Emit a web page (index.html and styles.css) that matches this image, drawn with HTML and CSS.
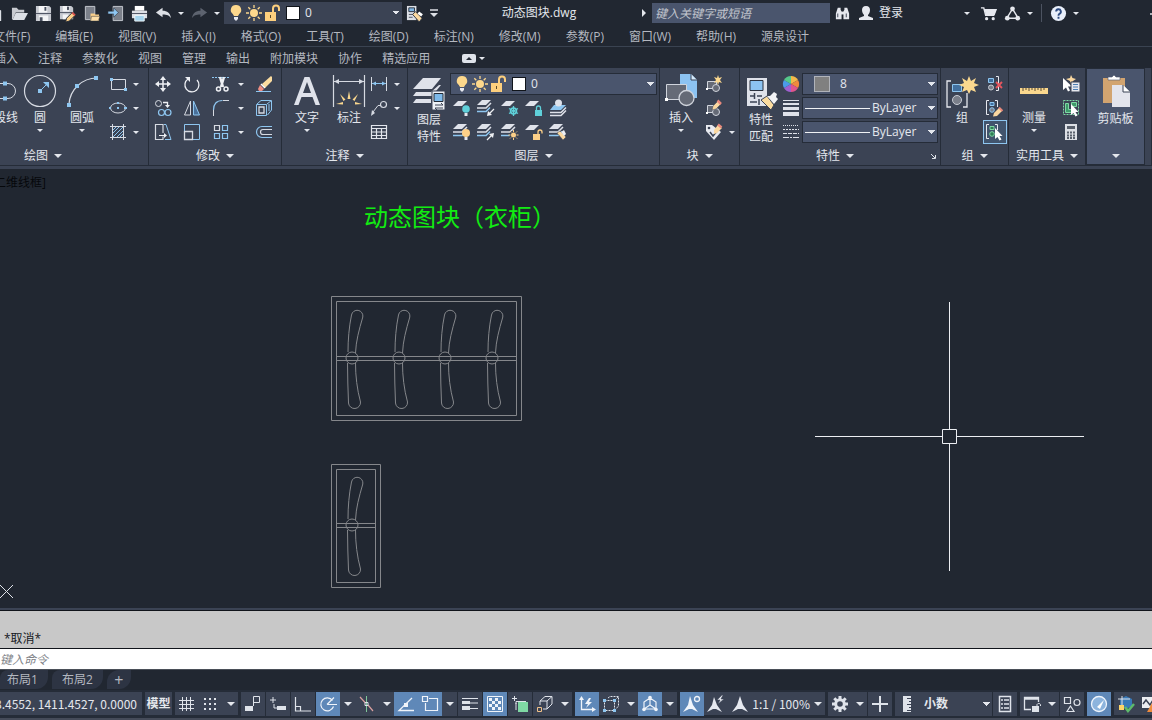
FILE: index.html
```html
<!DOCTYPE html>
<html lang="zh-CN">
<head>
  <meta charset="UTF-8">
  <meta name="viewport" content="width=device-width, initial-scale=1.0">
  <title>动态图块.dwg</title>
  <link rel="stylesheet" href="styles.css">
</head>
<body>
  <!-- icon sprite -->
  <svg class="sprite" aria-hidden="true">
    <symbol id="new" viewBox="0 0 18 18"><path d="M4 2h7l4 4v11H4z" fill="#dcdfe5"/></symbol>
    <symbol id="open" viewBox="0 0 18 18"><path d="M1 15V3h5l2 2h6v3H5L2 15z" fill="#c8cad0"/><path d="M5 8.500h13L14 16H1.500z" fill="#dcdfe5"/></symbol>
    <symbol id="save" viewBox="0 0 18 18"><path d="M1 1h14l2 2v14H1z" fill="#c6c9d0"/><path d="M4 1h9v7H4zM4 11h10v6H4z" fill="#f4f5f7"/><path d="M10 2h2v4h-2zM5 13h3v4H5z" fill="#4a5160"/><path d="M1 9h16" stroke="#4a5160"/></symbol>
    <symbol id="saveas" viewBox="0 0 18 18"><path d="M1 1h12l2 2v12H1z" fill="#c6c9d0"/><path d="M4 1h7v6H4zM4 10h6v5H4z" fill="#f4f5f7"/><path d="M9 2h1v3H9zM1 8h14" stroke="#4a5160"/><path d="M8 14l6-6 3 3-6 6-4 1z" fill="#fbd08a" stroke="#252b36"/><path d="M14 8l3 3" stroke="#d9534f" stroke-width="2"/></symbol>
    <symbol id="webopen" viewBox="0 0 18 18"><path d="M2.500 1.500h10v14h-10z" fill="#7b808a" stroke="#c6c9d0"/><path d="M8 9h4l1 1h4v7H8z" fill="#fbd08a"/><path d="M9 12h9l-2 5H8z" fill="#ffe0a8" stroke="#252b36" stroke-width=".5"/></symbol>
    <symbol id="websave" viewBox="0 0 18 18"><path d="M6.500 1.500h10v15h-10z" fill="#7b808a" stroke="#c6c9d0"/><path d="M1 6.500h6V3l5 5-5 5V9.500H1z" fill="#8fc7f2" stroke="#252b36" stroke-width=".6"/></symbol>
    <symbol id="print" viewBox="0 0 18 18"><path d="M4 1h10v5H4z" fill="#fff"/><path d="M1 6h16v8H1z" fill="#dcdfe5"/><path d="M1 9h16" stroke="#4a5160"/><path d="M4 11h10v6H4z" fill="#a5d4ee" stroke="#eef4f8"/></symbol>
    <symbol id="undo" viewBox="0 0 18 18"><path d="M1 8l7-5v3c5 0 8 2 9 8-2-3-4-4-9-4v3z" fill="#dcdfe5"/></symbol>
    <symbol id="redo" viewBox="0 0 18 18"><path d="M17 8l-7-5v3c-5 0-8 2-9 8 2-3 4-4 9-4v3z" fill="#5d636f"/></symbol>
    <symbol id="bulb" viewBox="0 0 18 18"><path d="M9 1a5 5 0 0 1 3.200 9L11 12H7l-1.200-2A5 5 0 0 1 9 1z" fill="#fdd88c"/><path d="M7 13h4v2l-2 2-2-2z" fill="#e8eaf0"/></symbol>
    <symbol id="sun" viewBox="0 0 18 18"><circle cx="9" cy="9" r="4" fill="#fdd88c"/><path d="M9 1v3M9 14v3M1 9h3M14 9h3M3.300 3.300l2 2M12.700 12.700l2 2M14.700 3.300l-2 2M5.300 12.700l-2 2" stroke="#fdd88c" stroke-width="1.300"/></symbol>
    <symbol id="unlock" viewBox="0 0 18 18"><path d="M2 8h11v9H2z" fill="#fdcf7d"/><path d="M10 8V4.500a3 3 0 0 1 6 0V7" fill="none" stroke="#fdcf7d" stroke-width="2"/><path d="M7 11h1v3H7z" fill="#5a4a2a"/></symbol>
    <symbol id="wsmatch" viewBox="0 0 18 18"><path d="M1 1h10v15H1z" fill="#dcdfe5"/><path d="M3 3h6v4H3z" fill="#7fb6e4" stroke="#2c3340"/><path d="M3 10h5M3 13h4" stroke="#4a5160"/><path d="M7 10l3-3 7 7-3 4z" fill="#fbd9a0" stroke="#2c3340"/><path d="M13 8l4 3" stroke="#fff" stroke-width="3"/></symbol>
    <symbol id="qmenu" viewBox="0 0 12 12"><path d="M2 3h8" stroke="#dcdfe5" stroke-width="1.500"/><path d="M2 6h8l-4 4z" fill="#dcdfe5"/></symbol>
    <symbol id="find" viewBox="0 0 18 18"><path d="M4 3h3v2l1 2v8H2V9zM14 3h-3v2l-1 2v8h6V9z" fill="#e6e8ee"/><path d="M7 7h4v3H7z" fill="#e6e8ee"/><path d="M4 9v4M13 9v4" stroke="#3a4150"/></symbol>
    <symbol id="user" viewBox="0 0 18 18"><path d="M9 2c3 0 4 2 4 4s-1 4-2 5v1l5 2v2H2v-2l5-2v-1C6 10 5 8 5 6s1-4 4-4z" fill="#e6e8ee"/></symbol>
    <symbol id="cart" viewBox="0 0 18 18"><path d="M1 3h3l2 8h9M5 5h12l-2 5H6" fill="none" stroke="#e6e8ee" stroke-width="1.500"/><path d="M5 5h12l-2 6H6z" fill="#e6e8ee"/><circle cx="7" cy="14.500" r="1.700" fill="#e6e8ee"/><circle cx="14" cy="14.500" r="1.700" fill="#e6e8ee"/></symbol>
    <symbol id="a360" viewBox="0 0 18 18"><path d="M9 4L3 14h12z" fill="none" stroke="#e6e8ee" stroke-width="1.500"/><circle cx="9" cy="4" r="2.500" fill="#e6e8ee"/><circle cx="3.500" cy="14" r="2.500" fill="#e6e8ee"/><circle cx="14.500" cy="14" r="2.500" fill="#e6e8ee"/></symbol>
    <symbol id="help" viewBox="0 0 18 18"><circle cx="9" cy="9" r="8" fill="#e9effa"/><path d="M6.500 7a2.500 2.500 0 1 1 3.500 2.300c-1 .5-1 1-1 2M9 12.500v2" fill="none" stroke="#2d4a80" stroke-width="2"/></symbol>
    <symbol id="min" viewBox="0 0 12 12"><path d="M2 9h8" stroke="#dcdfe5" stroke-width="1.500"/></symbol>

    <symbol id="pline" viewBox="0 0 36 36"><path d="M5 10.500h21a7.500 7.500 0 0 1 0 15H8" fill="none" stroke="#d6dae2"/><path d="M21 8.500h4v4h-4zM21 23.500h4v4h-4z" fill="#8ec6f0"/></symbol>
    <symbol id="circle" viewBox="0 0 36 36"><circle cx="18" cy="18" r="15.500" fill="none" stroke="#d6dae2" stroke-width="1.200"/><path d="M18 18l6-6" stroke="#8ec6f0"/><path d="M16 16h4v4h-4zM21 9h6v6z" fill="#8ec6f0"/></symbol>
    <symbol id="arc" viewBox="0 0 36 36"><path d="M5 31A28 28 0 0 1 33 5" fill="none" stroke="#d6dae2" stroke-width="1.200"/><path d="M3 30h4v4H3zM11 11h4v4h-4zM30 3h4v4h-4z" fill="#8ec6f0"/></symbol>
    <symbol id="rect" viewBox="0 0 18 18"><path d="M2.500 4.500h14v10h-14z" fill="none" stroke="#d6dae2"/><path d="M1 3h3v3H1zM15 13h3v3h-3z" fill="#8ec6f0"/></symbol>
    <symbol id="ellipse" viewBox="0 0 18 18"><ellipse cx="9" cy="9" rx="7.500" ry="5" fill="none" stroke="#d6dae2"/><path d="M8 8h2v2H8zM8 3h2v2H8zM15 8h3v2h-3zM0 8h2v2H0z" fill="#8ec6f0"/></symbol>
    <symbol id="hatch" viewBox="0 0 18 18"><path d="M4 14L14 4M4 10l6-6M8 14l6-6M4 7l3-3M11 14l3-3" stroke="#8ec6f0"/><path d="M3.500 1v16M14.500 1v16M1 3.500h16M1 14.500h16" stroke="#d6dae2"/></symbol>
    <symbol id="move" viewBox="0 0 18 18"><path d="M9 3v12M3 9h12" stroke="#eef0f4" stroke-width="1.500"/><path d="M9 1l3 4H6zM9 17l3-4H6zM1 9l4-3v6zM17 9l-4-3v6z" fill="#eef0f4"/></symbol>
    <symbol id="rotate" viewBox="0 0 18 18"><path d="M5 4a7 7 0 1 0 9 1" fill="none" stroke="#eef0f4" stroke-width="1.300"/><path d="M2 2h5v5z" fill="#eef0f4"/></symbol>
    <symbol id="trim" viewBox="0 0 18 18"><path d="M0 2.500h17" stroke="#8ec6f0" stroke-dasharray="2 1"/><path d="M8 2l3 10M12 2L9 12" stroke="#eef0f4" stroke-width="2.500"/><circle cx="6.500" cy="14" r="2" fill="none" stroke="#eef0f4" stroke-width="1.500"/><circle cx="14" cy="14" r="2" fill="none" stroke="#eef0f4" stroke-width="1.500"/></symbol>
    <symbol id="erase" viewBox="0 0 18 18"><path d="M1 16.500h15" stroke="#8ec6f0"/><path d="M7 9L16 1l1 1v4l-7 7z" fill="#fbdca0"/><path d="M5 10l4 4-2 2H4l-1-2z" fill="#ef8e83"/><path d="M6 9l4 4" stroke="#fff" stroke-width="1.500"/></symbol>
    <symbol id="copy" viewBox="0 0 18 18"><circle cx="4.500" cy="4.500" r="3" fill="none" stroke="#d6dae2"/><path d="M9 3.500h4.500V7" fill="none" stroke="#eef0f4" stroke-width="1.300"/><path d="M11 6h5l-2.500 3z" fill="#eef0f4"/><circle cx="7.500" cy="13.500" r="3" fill="none" stroke="#8ec6f0" stroke-width="1.200"/><circle cx="14" cy="13.500" r="3" fill="none" stroke="#8ec6f0" stroke-width="1.200"/></symbol>
    <symbol id="mirror" viewBox="0 0 18 18"><path d="M7.500 2v14h-6z" fill="none" stroke="#d6dae2"/><path d="M10.500 2v14h6z" fill="#49709a" stroke="#8ec6f0"/></symbol>
    <symbol id="fillet" viewBox="0 0 18 18"><path d="M1.500 11c0-6 3-9.500 9-9.500" fill="none" stroke="#8ec6f0" stroke-width="1.200"/><path d="M1.500 11v6M11 1.500h6" stroke="#d6dae2"/></symbol>
    <symbol id="explode" viewBox="0 0 18 18"><path d="M1.500 5.500h10v11h-10z" fill="none" stroke="#8ec6f0"/><path d="M4 8h5v6H4z" fill="none" stroke="#d6dae2" stroke-width="1.300"/><path d="M2 5l4-3.500h10.500M16.500 2v9l-4 5M12 5l4.500-3.500M14 5v7" fill="none" stroke="#8ec6f0"/></symbol>
    <symbol id="stretch" viewBox="0 0 18 18"><path d="M9 13.500v3H1.500v-15H9V10" fill="none" stroke="#d6dae2" stroke-width="1.200"/><path d="M10 1.500h2l5 15h-6" fill="none" stroke="#8ec6f0"/><path d="M5 12.500h7" stroke="#eef0f4"/><path d="M10 10l3 2.500-3 2.500z" fill="#eef0f4"/></symbol>
    <symbol id="scale" viewBox="0 0 18 18"><path d="M1.500 8V1.500h15v15H10" fill="none" stroke="#8ec6f0"/><path d="M1.500 8.500h8v8h-8z" fill="none" stroke="#d6dae2" stroke-width="1.300"/></symbol>
    <symbol id="array" viewBox="0 0 18 18"><path d="M2.500 2.500h5v5h-5z" fill="none" stroke="#d6dae2" stroke-width="1.200"/><path d="M10.500 2.500h5v5h-5zM2.500 10.500h5v5h-5zM10.500 10.500h5v5h-5z" fill="none" stroke="#8ec6f0" stroke-width="1.200"/></symbol>
    <symbol id="offset" viewBox="0 0 18 18"><path d="M17 3.500H7a5.500 5.500 0 0 0 0 11h10" fill="none" stroke="#8ec6f0" stroke-width="1.200"/><path d="M17 6.500H8a2.500 2.500 0 0 0 0 5h9" fill="none" stroke="#d6dae2" stroke-width="1.200"/></symbol>

    <symbol id="mtext" viewBox="0 0 36 36"><path fill-rule="evenodd" d="M5 32L15.500 4h5L31 32h-4.500l-3-8h-11l-3 8zM14 20h8L18 9z" fill="#dfe2ea"/></symbol>
    <symbol id="dim" viewBox="0 0 36 36"><path d="M2.500 2v32M33.500 2v32M3 8.500h30" stroke="#d6dae2" stroke-width="1.200"/><path d="M3 8.500l5-2.500v5zM33 8.500l-5-2.500v5z" fill="#d6dae2"/><g fill="#fbd88e"><path d="M18 18l1.500 8h-3zM9 21l5.500 5.500-2 1.500zM27 21l-5.500 5.500 2 1.500zM5 31l7-2v2.500zM31 31l-7-2v2.500z"/></g></symbol>
    <symbol id="lineardim" viewBox="0 0 18 18"><path d="M1.500 2v14M16.500 2v14" stroke="#d6dae2"/><path d="M2 8.500h14" stroke="#8ec6f0"/><path d="M2 8.500l4-2v4zM16 8.500l-4-2v4z" fill="#8ec6f0"/></symbol>
    <symbol id="leader" viewBox="0 0 18 18"><circle cx="13.500" cy="5.500" r="3" fill="none" stroke="#d6dae2" stroke-width="1.200"/><path d="M10.500 6.500H8L3 13" fill="none" stroke="#d6dae2"/><path d="M1 17l1-6 3 3z" fill="#d6dae2"/></symbol>
    <symbol id="table" viewBox="0 0 18 18"><path d="M1.500 2.500h15v13h-15zM1.500 5.500h15M1.500 9h15M1.500 12.500h15M6.500 5v11M11.500 5v11" fill="none" stroke="#e2e5ec" stroke-width="1.200"/></symbol>
    <symbol id="layers" viewBox="0 0 36 36"><path d="M12 3h18l-9 11H2z" fill="#dfe2ea"/><path d="M5 17l-3 4h19l9-11h-2l-8 7zM5 24l-3 4h18v-4z" fill="#dfe2ea"/><path d="M21 16h13v19H21z" fill="#eef1f6" stroke="#3b4354"/><path d="M23 18.500h9v8h-9z" fill="#7db9ea" stroke="#222a36"/><path d="M24 30h8l-2-2M32 33h-8l2 2" fill="none" stroke="#3b4354"/></symbol>
    <symbol id="ly" viewBox="0 0 18 18"><path d="M5 2h9l-5 5H0z" fill="#dfe2ea"/></symbol>
    <symbol id="ly3" viewBox="0 0 18 18"><path d="M5 1h9L9 6H0z" fill="#dfe2ea"/><path d="M0 9h9l5-5" fill="none" stroke="#dfe2ea" stroke-width="1.500"/><path d="M0 12.500h9l4-4" fill="none" stroke="#8ec6f0" stroke-width="1.500"/></symbol>
    <symbol id="lyoff" viewBox="0 0 18 18"><use href="#ly"/><circle cx="13" cy="10" r="3.800" fill="#5fd0da"/><path d="M11.500 14h3v3h-3z" fill="#e6e8ee"/></symbol>
    <symbol id="lyiso" viewBox="0 0 18 18"><use href="#ly3"/><path d="M17 10l-5 5" stroke="#eef0f4" stroke-width="1.300"/><path d="M10 17l1-5 4 4z" fill="#eef0f4"/></symbol>
    <symbol id="lyfrz" viewBox="0 0 18 18"><use href="#ly"/><circle cx="12.500" cy="12" r="3" fill="#3b4354" stroke="#5fd0da" stroke-width="1.500"/><path d="M12.500 7v10M8 9.500l9 5M17 9.500l-9 5" stroke="#5fd0da" stroke-width="1.300"/></symbol>
    <symbol id="lylock" viewBox="0 0 18 18"><use href="#ly"/><path d="M10 11h7v6h-7z" fill="#5fd0da"/><path d="M11.500 11V9a2 2 0 0 1 4 0v2" fill="none" stroke="#5fd0da" stroke-width="1.300"/></symbol>
    <symbol id="lycur" viewBox="0 0 18 18"><path d="M5 6h12l-5 5H1z" fill="#8ec6f0"/><path d="M1 13.500h11l5-5M1 16.500h11l5-5" fill="none" stroke="#dfe2ea" stroke-width="1.500"/><circle cx="9.500" cy="4" r="3.500" fill="#dfe2ea"/></symbol>
    <symbol id="lyon" viewBox="0 0 18 18"><use href="#ly3"/><circle cx="13" cy="10" r="4" fill="#fdd088"/><path d="M11.500 14h3v3h-3z" fill="#e6e8ee"/></symbol>
    <symbol id="lyun" viewBox="0 0 18 18"><use href="#ly3"/><path d="M10 17l5-5" stroke="#eef0f4" stroke-width="1.300"/><path d="M17 10l-1 5-4-4z" fill="#eef0f4"/></symbol>
    <symbol id="lythaw" viewBox="0 0 18 18"><use href="#ly3"/><circle cx="12.500" cy="12" r="4" fill="#3b4354"/><circle cx="12.500" cy="12" r="2.500" fill="#fdd088"/><path d="M12.500 7v2M12.500 15v2M7.500 12h2M15.500 12h2M9 8.500l1 1M15 14.500l1 1M16 8.500l-1 1M10 14.500l-1 1" stroke="#fdd088"/></symbol>
    <symbol id="lyulk" viewBox="0 0 18 18"><use href="#ly"/><path d="M8 11h7v6H8z" fill="#fdd088"/><path d="M13 11V9a2 2 0 0 1 4 0v1.500" fill="none" stroke="#fdd088" stroke-width="1.300"/></symbol>
    <symbol id="lymatch" viewBox="0 0 18 18"><use href="#ly3"/><path d="M8 10l3-2 6 6-3 3z" fill="#fbd9a0" stroke="#3b4354" stroke-width=".5"/><path d="M12 9l3-2 2 4-2 2z" fill="#eef0f4"/></symbol>
    <symbol id="insert" viewBox="0 0 36 36"><path d="M17 1h11l6 6v18H17z" fill="#8cc3f2"/><path d="M28 1v6h6" fill="#d6ebfc" stroke="#3b4354"/><path d="M3.500 11.500h20v15h-20z" fill="#656a76" stroke="#d0d4dc"/><circle cx="23.500" cy="25" r="7.500" fill="#656a76" stroke="#d0d4dc" stroke-width="1.300"/><path d="M2 25h3v3H2z" fill="#fff"/></symbol>
    <symbol id="blk" viewBox="0 0 18 18"><path d="M2.500 6.500h9v7h-9z" fill="#656a76" stroke="#d0d4dc"/><circle cx="11" cy="13" r="3.500" fill="#656a76" stroke="#d0d4dc"/><path d="M1 13h2v2H1z" fill="#fff"/></symbol>
    <symbol id="blknew" viewBox="0 0 18 18"><use href="#blk"/><path d="M13 0l1 3 3-1-2 3 2 3-3-1-1 3-1-3-3 1 2-3-2-3 3 1z" fill="#fbd88e"/></symbol>
    <symbol id="blkedit" viewBox="0 0 18 18"><use href="#blk"/><path d="M8 7l5-5 3 3-5 5-4 1z" fill="#fbd8a0" stroke="#3b4354" stroke-width=".5"/><path d="M12.500 1.500l3.500 3.500" stroke="#e8897c" stroke-width="2.500"/></symbol>
    <symbol id="attr" viewBox="0 0 18 18"><path d="M1 2h6l9 7-7 8-8-9z" fill="#e8eaf0"/><circle cx="4" cy="5" r="1.300" fill="#3b4354"/><path d="M5 9l3 4 5-6" fill="none" stroke="#3b4354" stroke-width="1.500"/><path d="M9 7l4-5 4 3-5 5-3 1z" fill="#fbd8a0"/><path d="M13 1.500l3.500 3" stroke="#e8897c" stroke-width="2.500"/></symbol>
    <symbol id="match" viewBox="0 0 36 36"><path d="M4 3h20v28H4z" fill="#dfe2ea"/><path d="M7 5.500h13v10H7z" fill="#8cc3f2" stroke="#2a313e"/><path d="M7 21h4M14 21h5M7 27h7M11.500 18v6M16 24v6" stroke="#3b4354" stroke-width="1.500"/><path d="M18 25l6-4 7 9-3 5z" fill="#fbdca0" stroke="#3b4354"/><path d="M24 21l3 0 4-4 3 2-1 3 2 2-4 5z" fill="#f2f3f6"/></symbol>
    <symbol id="wheel" viewBox="0 0 18 18"><path d="M9 9V1a8 8 0 0 1 7 4z" fill="#f2b94a"/><path d="M9 9l7-4a8 8 0 0 1 0 8z" fill="#f08a3c"/><path d="M9 9l7 4a8 8 0 0 1-7 4z" fill="#e0558c"/><path d="M9 9v8a8 8 0 0 1-7-4z" fill="#a05fd0"/><path d="M9 9l-7 4a8 8 0 0 1 0-8z" fill="#4b9be8"/><path d="M9 9L2 5a8 8 0 0 1 7-4z" fill="#55c88a"/></symbol>
    <symbol id="lweight" viewBox="0 0 18 18"><path d="M1 1.500h16" stroke="#dfe2ea"/><path d="M1 5h16" stroke="#dfe2ea" stroke-width="2"/><path d="M1 9.500h16" stroke="#dfe2ea" stroke-width="3"/><path d="M1 15h16" stroke="#dfe2ea" stroke-width="4"/></symbol>
    <symbol id="ltype" viewBox="0 0 18 18"><path d="M1 2.500h16" stroke="#dfe2ea" stroke-dasharray="1 1"/><path d="M1 6.500h16" stroke="#dfe2ea" stroke-dasharray="2 1"/><path d="M1 10.500h16" stroke="#dfe2ea" stroke-dasharray="4 1"/><path d="M1 14.500h16" stroke="#dfe2ea" stroke-dasharray="6 1 2 1"/></symbol>
    <symbol id="group" viewBox="0 0 36 36"><path d="M7 8H3v26h4M19 34h4V20" fill="none" stroke="#e6e8ee" stroke-width="1.300"/><path d="M8.500 11.500h9v7h-9z" fill="#42709f" stroke="#8ec6f0"/><circle cx="13" cy="27" r="4.500" fill="#7a7f8a" stroke="#c8ccd4"/><path d="M25 3l2 5 5-3-2 5 5 2-5 2 2 5-5-2-2 4-2-4-5 2 2-5-5-2 5-2-2-5 5 3z" fill="#fbd88e"/></symbol>
    <symbol id="ungroup" viewBox="0 0 18 18"><path d="M10 1.500h2.500v14H10" fill="none" stroke="#e6e8ee"/><path d="M2.500 3.500h5v4h-5z" fill="#42709f" stroke="#8ec6f0"/><circle cx="5" cy="12.500" r="2.500" fill="#7a7f8a" stroke="#c8ccd4"/><path d="M10 7l6 6M16 7l-6 6" stroke="#e8565e" stroke-width="1.800"/></symbol>
    <symbol id="grpedit" viewBox="0 0 18 18"><path d="M3 1.500H.5v14H3M9 1.500h2.500V8" fill="none" stroke="#e6e8ee"/><path d="M4 3.500h4v3H4z" fill="#42709f" stroke="#8ec6f0"/><circle cx="6" cy="11" r="2.300" fill="#7a7f8a" stroke="#8ec6f0"/><path d="M8 14l5-5 3 3-5 5-4 .5z" fill="#fbd8a0"/><path d="M13 8.500l3.500 3.500" stroke="#e8897c" stroke-width="2"/></symbol>
    <symbol id="grpsel" viewBox="0 0 18 18"><path d="M3 1.500H.5v14H3M9 1.500h2.500V7" fill="none" stroke="#e6e8ee"/><path d="M4 3.500h4v3H4z" fill="#2f7d55" stroke="#7fd8a4"/><circle cx="6" cy="11" r="2.300" fill="#2f7d55" stroke="#7fd8a4"/><path d="M9 5v11l2.500-2 2 3.500 2-1-2-3.500h3z" fill="#fff"/></symbol>
    <symbol id="ruler" viewBox="0 0 36 36"><path d="M4 15h28v6H4z" fill="#fbd88e"/><path d="M7 15v3M10 15v2M13 15v3M16 15v2M19 15v3M22 15v2M25 15v3M28 15v2" stroke="#5a4d35"/></symbol>
    <symbol id="qselect" viewBox="0 0 18 18"><path d="M9 0l1.500 3L14 4l-3 2-2 3-1-3-4-2 4-1z" fill="#fbd8a0"/><path d="M1 3v12l3-2.500 2 4 2-1-2-4h4z" fill="#fff"/><path d="M9 7h9v10H9z" fill="#e6e8ee" stroke="#3b4354"/><path d="M11 9.500h5M11 12h5M11 14.500h5" stroke="#4c7fb5"/></symbol>
    <symbol id="selall" viewBox="0 0 18 18"><path d="M1.500 1.500h15v14h-15z" fill="none" stroke="#7fd8a4" stroke-dasharray="2 1"/><path d="M3.500 4.500h3v6h4v3h-7zM9.500 3.500h5v4h-5z" fill="#3f9a6a" stroke="#7fd8a4"/><path d="M9 5v11l2.500-2 2 3.500 2-1-2-3.500h3z" fill="#fff"/></symbol>
    <symbol id="calc" viewBox="0 0 18 18"><path d="M3 1h12v16H3z" fill="#dcdfe5"/><path d="M5 3h8v3H5z" fill="#59606c"/><path d="M5 9.500h8M5 12.500h8M5 15h8" stroke="#59606c" stroke-width="2" stroke-dasharray="2 1"/></symbol>
    <symbol id="paste" viewBox="0 0 36 36"><path d="M5 4h22v25H5z" fill="#d2a470"/><path d="M10 6V3h4l2-2 2 2h4v3z" fill="#fff" stroke="#4a556d" stroke-width=".6"/><path d="M14 11h11l7 7v15H14z" fill="#e3e4ec"/><path d="M25 11v7h7" fill="#fff" stroke="#3b4354"/></symbol>
    <symbol id="pill" viewBox="0 0 14 9"><rect width="14" height="9" rx="2" fill="#dfe3ea"/><path d="M4 6h6L7 3z" fill="#252b36"/></symbol>
    <symbol id="launch" viewBox="0 0 8 8"><path d="M2 2l4 4M6.500 3v3.500H3" fill="none" stroke="#dfe3ea"/></symbol>

    <symbol id="grid" viewBox="0 0 18 18"><path d="M4.500 2v14M8.500 2v14M12.500 2v14M1 5.500h15M1 9.500h15M1 13.500h15" stroke="#dfe3ea"/></symbol>
    <symbol id="snap" viewBox="0 0 18 18"><path d="M2 3h2v2H2zM7 3h2v2H7zM12 3h2v2h-2zM2 8h2v2H2zM7 8h2v2H7zM12 8h2v2h-2zM2 13h2v2H2zM7 13h2v2H7zM12 13h2v2h-2z" fill="#dfe3ea"/></symbol>
    <symbol id="infer" viewBox="0 0 18 18"><path d="M1 11h8v5H1z" fill="#dfe3ea"/><path d="M9.500 11V1.500h6v6h-6" fill="none" stroke="#dfe3ea"/></symbol>
    <symbol id="dyn" viewBox="0 0 18 18"><path d="M1 5h6M4 2v6M5 9v4h3" fill="none" stroke="#dfe3ea"/><path d="M8 11h9v4H8z" fill="#dfe3ea"/></symbol>
    <symbol id="ortho" viewBox="0 0 18 18"><path d="M1.500 2v14H17M1.500 11.500h5V16" fill="none" stroke="#dfe3ea" stroke-width="1.200"/></symbol>
    <symbol id="polar" viewBox="0 0 18 18"><path d="M13.500 5.500a6.500 6.500 0 1 0 1 6M8 9.500h10M8 9.500l7-7" fill="none" stroke="#f0f4fa" stroke-width="1.200"/></symbol>
    <symbol id="iso" viewBox="0 0 18 18"><path d="M8.500 1v16" stroke="#7fc79a"/><path d="M2 2l5.500 6M10 10l5 6" stroke="#d9a0a0" stroke-width="1.200"/><path d="M7 7.500h3v3H7z" fill="none" stroke="#dfe3ea"/></symbol>
    <symbol id="otrack" viewBox="0 0 18 18"><path d="M15 3L2 15.500h15" fill="none" stroke="#f0f4fa" stroke-width="1.300"/><path d="M7 8h4v4H7z" fill="#f0f4fa"/></symbol>
    <symbol id="osnap" viewBox="0 0 18 18"><path d="M8 3.500h8.500v12h-12V8" fill="none" stroke="#f0f4fa" stroke-width="1.200"/><path d="M1.500 1.500h5v5h-5z" fill="none" stroke="#f0f4fa" stroke-width="1.200"/></symbol>
    <symbol id="lwt" viewBox="0 0 18 18"><path d="M1 3.500h16M9 8h8M9 13.500h8" stroke="#dfe3ea"/><path d="M1 7.500h8" stroke="#dfe3ea" stroke-width="3"/><path d="M1 13h8" stroke="#dfe3ea" stroke-width="4"/></symbol>
    <symbol id="transp" viewBox="0 0 18 18"><path d="M1.500 1.500h15v15h-15z" fill="none" stroke="#f0f4fa"/><path d="M3 3h3v3H3zM9 3h3v3H9zM6 6h3v3H6zM12 6h3v3h-3zM3 9h3v3H3zM9 9h3v3H9zM6 12h3v3H6zM12 12h3v3h-3z" fill="#f0f4fa"/></symbol>
    <symbol id="cycle" viewBox="0 0 18 18"><path d="M1 3.500h5M3.500 1v5M5 9V6.500h10" fill="none" stroke="#dfe3ea"/><path d="M7 7h10v10H7z" fill="#7fd8a4"/><path d="M5 8v7" stroke="#dfe3ea"/></symbol>
    <symbol id="osnap3" viewBox="0 0 18 18"><path d="M4 10V6l5-4.500h7V9l-5 5H7M4 6h7v8M11 6l5-4.500" fill="none" stroke="#dfe3ea"/><path d="M1.500 12.500h4v4h-4z" fill="none" stroke="#f0c088"/></symbol>
    <symbol id="ducs" viewBox="0 0 18 18"><path d="M3.500 3v11.500H16" fill="none" stroke="#f0f4fa" stroke-width="1.300"/><path d="M1 5l2.500-4L6 5zM14 12l4 2.500-4 2.500zM11 3L7 9h3l-2 4 6-6h-3l2-4z" fill="#f0f4fa"/></symbol>
    <symbol id="selfil" viewBox="0 0 18 18"><path d="M2.500 5.500h10v10h-10zM6 3l2-1.500h8.500V11L13 15M13 5l3-3" fill="none" stroke="#dfe3ea" stroke-dasharray="2 1"/><path d="M1 4h3v3H1zM11 4h3v3h-3zM1 14h3v3H1zM11 14h3v3h-3z" fill="#8ec6f0"/></symbol>
    <symbol id="gizmo" viewBox="0 0 18 18"><path d="M9 3l6 4v7H3V7zM9 3v7l-6 4M9 10l6 4" fill="none" stroke="#f0f4fa" stroke-width="1.200"/><circle cx="9" cy="2.500" r="1.800" fill="#f0f4fa"/><circle cx="3" cy="14.500" r="1.800" fill="#f0f4fa"/><circle cx="15" cy="14.500" r="1.800" fill="#f0f4fa"/></symbol>
    <symbol id="anno" viewBox="0 0 18 18"><path d="M9 1l3 9 5 7-6-3H7l-6 3 5-7z" fill="#e6e9f0"/></symbol>
    <symbol id="annovis" viewBox="0 0 18 18"><path d="M7 1l3 9 5 7-6-3H6l-6 3 5-7z" fill="#f0f4fa"/><circle cx="14" cy="4" r="2.500" fill="none" stroke="#f0f4fa" stroke-width="1.300"/></symbol>
    <symbol id="annoauto" viewBox="0 0 18 18"><path d="M7 2l3 8 5 7-6-3H6l-6 3 5-7z" fill="#e6e9f0"/><path d="M15 0l-5 5h3l-2 4 6-5h-3l2-4z" fill="#e6e9f0" stroke="#3b4254" stroke-width=".5"/></symbol>
    <symbol id="gear" viewBox="0 0 18 18"><circle cx="9" cy="9" r="4.300" fill="none" stroke="#dfe3ea" stroke-width="3"/><path d="M9 1v3M9 14v3M1 9h3M14 9h3M3.300 3.300l2.200 2.200M12.500 12.500l2.200 2.200M14.700 3.300l-2.200 2.200M5.500 12.500l-2.200 2.200" stroke="#dfe3ea" stroke-width="3"/></symbol>
    <symbol id="plus" viewBox="0 0 18 18"><path d="M9 1v16M1 9h16" stroke="#dfe3ea" stroke-width="2"/></symbol>
    <symbol id="units" viewBox="0 0 18 18"><path d="M5 1h8v16H5z" fill="#dfe3ea"/><path d="M9 3.500h4M11 6.500h2M9 9.500h4M11 12.500h2M9 15.500h4" stroke="#3b4254"/></symbol>
    <symbol id="qprops" viewBox="0 0 18 18"><path d="M3.500 1.500h11v15h-11zM5 5h2M8 5h5M5 9h2M8 9h5M5 13h2M8 13h5" fill="none" stroke="#dfe3ea" stroke-width="1.500"/></symbol>
    <symbol id="lockui" viewBox="0 0 18 18"><path d="M8 14.500H1.500v-12h14V7M1 4h15" fill="none" stroke="#dfe3ea" stroke-width="1.300"/><path d="M9 11h7v6H9z" fill="#dfe3ea"/><path d="M14 11V9.500a2 2 0 0 1 3.500 0V11" fill="none" stroke="#dfe3ea"/></symbol>
    <symbol id="isolate" viewBox="0 0 18 18"><path d="M1.500 2.500h6v6h-6zM7.500 11l3.500 5.500H4z" fill="none" stroke="#dfe3ea" stroke-width="1.200"/><circle cx="14" cy="7.500" r="3" fill="none" stroke="#dfe3ea" stroke-width="1.200"/></symbol>
    <symbol id="perf" viewBox="0 0 18 18"><circle cx="9" cy="9" r="7.500" fill="#8db4dd" stroke="#eef4fc" stroke-width="1.300"/><path d="M7 12l7-7-4 9z" fill="#fff"/></symbol>
    <symbol id="cui" viewBox="0 0 18 18"><path d="M3 4l6-3 6 3v7l-6 3-6-3z" fill="#3779b8"/><path d="M1 4h12M5 1v12" stroke="#dfe3ea"/><path d="M2 10h5v5H2z" fill="#fbd46a"/><path d="M8 12l3 4 6-7" fill="none" stroke="#5dbb6c" stroke-width="2.500"/></symbol>
    <symbol id="warn" viewBox="0 0 18 18"><path d="M1 2h16v11H1z" fill="#eceef2"/><path d="M2 9l3-4 4 5 3-5" fill="none" stroke="#3b4254" stroke-width="1.500"/><path d="M11 8l6 9H6z" fill="#ef8b3c"/></symbol>
    <symbol id="hanger" viewBox="0 0 20 102"><g fill="none" stroke="#85878b"><circle cx="7" cy="50" r="6"/><path d="M3 44C3 32 4 19 6.500 7a5.700 5.700 0 0 1 11.300 2C14 22 11 33 10.500 45M2.500 55c0 13 .5 27 1 40a6 6 0 0 0 12-1C12 81 10.500 68 10.500 55"/></g></symbol>
  </svg>

  <header class="titlebar">
    <div class="quick">
      <button class="tool" aria-label="新建"><svg><use href="#new"/></svg></button>
      <button class="tool" aria-label="打开"><svg><use href="#open"/></svg></button>
      <button class="tool" aria-label="保存"><svg><use href="#save"/></svg></button>
      <button class="tool" aria-label="另存为"><svg><use href="#saveas"/></svg></button>
      <button class="tool" aria-label="从云打开"><svg><use href="#webopen"/></svg></button>
      <button class="tool" aria-label="保存到云"><svg><use href="#websave"/></svg></button>
      <button class="tool" aria-label="打印"><svg><use href="#print"/></svg></button>
      <button class="tool" aria-label="放弃"><svg><use href="#undo"/></svg></button>
      <button class="drop" aria-label="放弃列表"></button>
      <button class="tool" aria-label="重做"><svg><use href="#redo"/></svg></button>
      <button class="drop" aria-label="重做列表"></button>
    </div>
    <div class="combo quick-layer">
      <svg><use href="#bulb"/></svg><svg><use href="#sun"/></svg><svg><use href="#unlock"/></svg>
      <span class="swatch"></span>
      <select aria-label="当前图层"><option>0</option></select>
    </div>
    <button class="tool" aria-label="图层匹配"><svg><use href="#wsmatch"/></svg></button>
    <button class="drop-menu" aria-label="自定义快速访问"><svg><use href="#qmenu"/></svg></button>
    <h1 class="doc-title">动态图块.dwg</h1>
    <button class="drop right" aria-label="展开搜索"></button>
    <input class="search" type="search" placeholder="键入关键字或短语" aria-label="搜索">
    <button class="tool" aria-label="查找"><svg><use href="#find"/></svg></button>
    <button class="login"><svg><use href="#user"/></svg>登录</button>
    <button class="drop login-menu" aria-label="登录菜单"></button>
    <button class="tool" aria-label="商店"><svg><use href="#cart"/></svg></button>
    <button class="tool" aria-label="应用"><svg><use href="#a360"/></svg></button>
    <button class="drop" aria-label="应用菜单"></button>
    <span class="divider"></span>
    <button class="tool" aria-label="帮助"><svg><use href="#help"/></svg></button>
    <button class="drop" aria-label="帮助菜单"></button>
    <button class="minimize" aria-label="最小化"><svg><use href="#min"/></svg></button>
  </header>

  <nav class="menubar">
    <a href="#">文件(F)</a><a href="#">编辑(E)</a><a href="#">视图(V)</a><a href="#">插入(I)</a><a href="#">格式(O)</a><a href="#">工具(T)</a><a href="#">绘图(D)</a><a href="#">标注(N)</a><a href="#">修改(M)</a><a href="#">参数(P)</a><a href="#">窗口(W)</a><a href="#">帮助(H)</a><a href="#">源泉设计</a>
  </nav>

  <nav class="tabs">
    <a href="#">插入</a><a href="#">注释</a><a href="#">参数化</a><a href="#">视图</a><a href="#">管理</a><a href="#">输出</a><a href="#">附加模块</a><a href="#">协作</a><a href="#">精选应用</a>
    <button class="collapse" aria-label="最小化功能区"><svg><use href="#pill"/></svg></button>
    <button class="drop" aria-label="功能区选项"></button>
  </nav>

  <div class="ribbon">
    <section class="panel draw">
      <div class="panel-body">
        <button class="big"><svg><use href="#pline"/></svg>多段线</button>
        <button class="big narrow"><svg><use href="#circle"/></svg>圆<i class="caret"></i></button>
        <button class="big"><svg><use href="#arc"/></svg>圆弧<i class="caret"></i></button>
        <div class="smalls with-drop">
          <button class="tool" aria-label="矩形"><svg><use href="#rect"/></svg></button><button class="drop" aria-label="矩形菜单"></button>
          <button class="tool" aria-label="椭圆"><svg><use href="#ellipse"/></svg></button><button class="drop" aria-label="椭圆菜单"></button>
          <button class="tool" aria-label="图案填充"><svg><use href="#hatch"/></svg></button><button class="drop" aria-label="填充菜单"></button>
        </div>
      </div>
      <button class="panel-title">绘图</button>
    </section>

    <section class="panel modify">
      <div class="panel-body">
        <div class="smalls modify-grid">
          <button class="tool" aria-label="移动"><svg><use href="#move"/></svg></button>
          <button class="tool" aria-label="旋转"><svg><use href="#rotate"/></svg></button>
          <button class="tool" aria-label="修剪"><svg><use href="#trim"/></svg></button>
          <button class="drop" aria-label="修剪菜单"></button>
          <button class="tool" aria-label="删除"><svg><use href="#erase"/></svg></button>
          <button class="tool" aria-label="复制"><svg><use href="#copy"/></svg></button>
          <button class="tool" aria-label="镜像"><svg><use href="#mirror"/></svg></button>
          <button class="tool" aria-label="圆角"><svg><use href="#fillet"/></svg></button>
          <button class="drop" aria-label="圆角菜单"></button>
          <button class="tool" aria-label="分解"><svg><use href="#explode"/></svg></button>
          <button class="tool" aria-label="拉伸"><svg><use href="#stretch"/></svg></button>
          <button class="tool" aria-label="缩放"><svg><use href="#scale"/></svg></button>
          <button class="tool" aria-label="阵列"><svg><use href="#array"/></svg></button>
          <button class="drop" aria-label="阵列菜单"></button>
          <button class="tool" aria-label="偏移"><svg><use href="#offset"/></svg></button>
        </div>
      </div>
      <button class="panel-title">修改</button>
    </section>

    <section class="panel annotate">
      <div class="panel-body">
        <button class="big"><svg><use href="#mtext"/></svg>文字<i class="caret"></i></button>
        <button class="big narrow"><svg><use href="#dim"/></svg>标注</button>
        <div class="smalls with-drop">
          <button class="tool" aria-label="线性"><svg><use href="#lineardim"/></svg></button><button class="drop" aria-label="线性菜单"></button>
          <button class="tool" aria-label="引线"><svg><use href="#leader"/></svg></button><button class="drop" aria-label="引线菜单"></button>
          <button class="tool" aria-label="表格"><svg><use href="#table"/></svg></button>
        </div>
      </div>
      <button class="panel-title">注释</button>
    </section>

    <section class="panel layer">
      <div class="panel-body">
        <button class="big two"><svg><use href="#layers"/></svg>图层<br>特性</button>
        <div class="layer-side">
          <div class="combo">
            <svg><use href="#bulb"/></svg><svg><use href="#sun"/></svg><svg><use href="#unlock"/></svg>
            <span class="swatch"></span>
            <select aria-label="图层"><option>0</option></select>
          </div>
          <div class="smalls layer-grid">
            <button class="tool" aria-label="关"><svg><use href="#lyoff"/></svg></button>
            <button class="tool" aria-label="隔离"><svg><use href="#lyiso"/></svg></button>
            <button class="tool" aria-label="冻结"><svg><use href="#lyfrz"/></svg></button>
            <button class="tool" aria-label="锁定"><svg><use href="#lylock"/></svg></button>
            <button class="tool" aria-label="置为当前"><svg><use href="#lycur"/></svg></button>
            <button class="tool" aria-label="打开所有图层"><svg><use href="#lyon"/></svg></button>
            <button class="tool" aria-label="取消隔离"><svg><use href="#lyun"/></svg></button>
            <button class="tool" aria-label="解冻"><svg><use href="#lythaw"/></svg></button>
            <button class="tool" aria-label="解锁"><svg><use href="#lyulk"/></svg></button>
            <button class="tool" aria-label="匹配图层"><svg><use href="#lymatch"/></svg></button>
          </div>
        </div>
      </div>
      <button class="panel-title">图层</button>
    </section>

    <section class="panel block">
      <div class="panel-body">
        <button class="big"><svg><use href="#insert"/></svg>插入<i class="caret"></i></button>
        <div class="smalls with-drop">
          <button class="tool" aria-label="创建块"><svg><use href="#blknew"/></svg></button><span></span>
          <button class="tool" aria-label="编辑块"><svg><use href="#blkedit"/></svg></button><span></span>
          <button class="tool" aria-label="编辑属性"><svg><use href="#attr"/></svg></button><button class="drop" aria-label="属性菜单"></button>
        </div>
      </div>
      <button class="panel-title">块</button>
    </section>

    <section class="panel props">
      <div class="panel-body">
        <button class="big two"><svg><use href="#match"/></svg>特性<br>匹配</button>
        <div class="prop-rows">
          <svg><use href="#wheel"/></svg>
          <div class="combo"><span class="swatch gray"></span><select aria-label="对象颜色"><option>8</option></select></div>
          <svg><use href="#lweight"/></svg>
          <div class="combo"><span class="line"></span><select class="by" aria-label="线宽"><option>ByLayer</option></select></div>
          <svg><use href="#ltype"/></svg>
          <div class="combo"><span class="line"></span><select class="by" aria-label="线型"><option>ByLayer</option></select></div>
        </div>
      </div>
      <div class="title-row">
        <button class="panel-title">特性</button>
        <button class="launcher" aria-label="特性选项板"><svg><use href="#launch"/></svg></button>
      </div>
    </section>

    <section class="panel groups">
      <div class="panel-body">
        <button class="big"><svg><use href="#group"/></svg>组</button>
        <div class="smalls">
          <button class="tool" aria-label="解除编组"><svg><use href="#ungroup"/></svg></button>
          <button class="tool" aria-label="组编辑"><svg><use href="#grpedit"/></svg></button>
          <button class="tool picked" aria-label="组选择"><svg><use href="#grpsel"/></svg></button>
        </div>
      </div>
      <button class="panel-title">组</button>
    </section>

    <section class="panel utils">
      <div class="panel-body">
        <button class="big"><svg><use href="#ruler"/></svg>测量<i class="caret"></i></button>
        <div class="smalls">
          <button class="tool" aria-label="快速选择"><svg><use href="#qselect"/></svg></button>
          <button class="tool" aria-label="全部选择"><svg><use href="#selall"/></svg></button>
          <button class="tool" aria-label="计算器"><svg><use href="#calc"/></svg></button>
        </div>
      </div>
      <button class="panel-title">实用工具</button>
    </section>

    <section class="panel clip">
      <div class="panel-body">
        <button class="big"><svg><use href="#paste"/></svg>剪贴板</button>
      </div>
      <button class="panel-title" aria-label="剪贴板菜单"></button>
    </section>
    <section class="panel rest"></section>
  </div>

  <main class="canvas">
    <span class="viewstyle">[二维线框]</span>
    <h2 class="drawing-title">动态图块（衣柜）</h2>
    <svg class="wardrobe wide" viewBox="0 0 192 126">
      <g fill="none" stroke="#85878b"><path d="M.5.500h190v124H.5zM5.500 5.500h180v114H5.500zM5.500 60.500h180M5.500 64.500h180"/></g>
      <use href="#hanger" x="14" y="12" width="20" height="102"/>
      <use href="#hanger" x="61" y="12" width="20" height="102"/>
      <use href="#hanger" x="107" y="12" width="20" height="102"/>
      <use href="#hanger" x="154" y="12" width="20" height="102"/>
    </svg>
    <svg class="wardrobe single" viewBox="0 0 51 126">
      <g fill="none" stroke="#85878b"><path d="M.5.500h49v123H.5zM5.500 5.500h39v113h-39zM5.500 59.500h39M5.500 63.500h39"/></g>
      <use href="#hanger" x="14" y="11" width="20" height="102"/>
    </svg>
    <svg class="crosshair" viewBox="0 0 270 270"><path d="M134.500 0v127M134.500 142v127M0 134.500h127M142 134.500h127M127.500 127.500h14v14h-14z" fill="none" stroke="#eceef2"/></svg>
    <svg class="ucs" viewBox="0 0 14 14"><path d="M0 0l13 13M13 0L0 13" stroke="#dfe3ea"/></svg>
  </main>

  <section class="command">
    <p class="history">*取消*</p>
    <input class="prompt" type="text" placeholder="键入命令" aria-label="命令行">
  </section>

  <nav class="layouts">
    <a href="#">布局1</a><a href="#">布局2</a><button aria-label="新建布局">+</button>
  </nav>

  <footer class="status">
    <div class="coords">3838.4552, 1411.4527, 0.0000</div>
    <div class="cell"><button class="text model">模型</button></div>
    <div class="cell">
      <button class="tool" aria-label="栅格"><svg><use href="#grid"/></svg></button>
      <button class="tool" aria-label="捕捉"><svg><use href="#snap"/></svg></button>
      <button class="drop" aria-label="捕捉菜单"></button>
    </div>
    <div class="cell ruled">
      <button class="tool" aria-label="推断约束"><svg><use href="#infer"/></svg></button>
      <button class="tool" aria-label="动态输入"><svg><use href="#dyn"/></svg></button>
      <button class="tool" aria-label="正交"><svg><use href="#ortho"/></svg></button>
      <div class="sub">
        <button class="tool on" aria-label="极轴"><svg><use href="#polar"/></svg></button>
        <button class="drop" aria-label="极轴菜单"></button>
        <button class="tool" aria-label="等轴测"><svg><use href="#iso"/></svg></button>
        <button class="drop" aria-label="等轴测菜单"></button>
        <button class="tool on" aria-label="对象追踪"><svg><use href="#otrack"/></svg></button>
        <button class="tool on" aria-label="对象捕捉"><svg><use href="#osnap"/></svg></button>
        <button class="drop" aria-label="对象捕捉菜单"></button>
      </div>
      <button class="tool" aria-label="线宽显示"><svg><use href="#lwt"/></svg></button>
      <button class="tool on" aria-label="透明度"><svg><use href="#transp"/></svg></button>
      <button class="tool" aria-label="选择循环"><svg><use href="#cycle"/></svg></button>
      <div class="sub">
        <button class="tool" aria-label="三维捕捉"><svg><use href="#osnap3"/></svg></button>
        <button class="drop" aria-label="三维捕捉菜单"></button>
      </div>
    </div>
    <div class="cell">
      <button class="tool on" aria-label="动态坐标系"><svg><use href="#ducs"/></svg></button>
      <button class="tool" aria-label="选择过滤"><svg><use href="#selfil"/></svg></button>
      <button class="drop" aria-label="过滤菜单"></button>
      <button class="tool on" aria-label="小控件"><svg><use href="#gizmo"/></svg></button>
      <button class="drop" aria-label="小控件菜单"></button>
    </div>
    <div class="cell">
      <button class="tool on" aria-label="注释可见性"><svg><use href="#annovis"/></svg></button>
      <button class="tool" aria-label="自动缩放"><svg><use href="#annoauto"/></svg></button>
      <button class="tool" aria-label="注释比例"><svg><use href="#anno"/></svg></button>
      <button class="text ratio">1:1 / 100%</button>
      <button class="drop" aria-label="比例菜单"></button>
    </div>
    <div class="cell ruled">
      <div class="sub">
        <button class="tool" aria-label="工作空间"><svg><use href="#gear"/></svg></button>
        <button class="drop" aria-label="工作空间菜单"></button>
      </div>
      <button class="tool" aria-label="注释监视器"><svg><use href="#plus"/></svg></button>
    </div>
    <div class="cell ruled">
      <div class="sub">
        <svg class="icon"><use href="#units"/></svg>
        <select class="units" aria-label="单位"><option>小数</option></select>
      </div>
      <button class="tool" aria-label="快捷特性"><svg><use href="#qprops"/></svg></button>
    </div>
    <div class="cell ruled">
      <div class="sub">
        <button class="tool" aria-label="锁定界面"><svg><use href="#lockui"/></svg></button>
        <button class="drop" aria-label="锁定菜单"></button>
      </div>
      <button class="tool" aria-label="隔离对象"><svg><use href="#isolate"/></svg></button>
    </div>
    <div class="cell"><button class="tool on" aria-label="图形性能"><svg><use href="#perf"/></svg></button></div>
    <div class="cell">
      <button class="tool" aria-label="校验"><svg><use href="#cui"/></svg></button>
      <button class="tool" aria-label="警告"><svg><use href="#warn"/></svg></button>
    </div>
  </footer>
</body>
</html>
```
FILE: styles.css
```css
:root {
  --dark: #212731;
  --panel: #3b4354;
  --field: #4a556d;
  --edge: #252c38;
  --text: #e4e7ed;
  --muted: #b4b8c0;
  --on: #5f88b8;
}

* {
  box-sizing: border-box;
  margin: 0;
  padding: 0;
}

body {
  font-family: "Open Sans", "Noto Sans CJK SC", sans-serif;
  font-size: 12px;
  line-height: 18px;
  color: var(--text);
  background: var(--dark);
  height: 100vh;
  display: flex;
  flex-direction: column;
  overflow: hidden;
}

button, input, select {
  font: inherit;
  color: inherit;
  background: none;
  border: 0;
  border-radius: 0;
}

a {
  color: inherit;
  text-decoration: none;
  white-space: nowrap;
}

.sprite {
  width: 0;
  height: 0;
  position: absolute;
}

/* Shared controls */
.tool {
  width: 24px;
  height: 24px;
  flex: none;
  display: flex;
  align-items: center;
  justify-content: center;
}

.tool svg, .combo svg, .login svg {
  width: 18px;
  height: 18px;
  flex: none;
}

.drop {
  width: 12px;
  height: 24px;
  flex: none;
  display: flex;
  align-items: center;
  justify-content: center;
}

.drop::after, .caret {
  content: '';
  border: 3px solid transparent;
  border-top-color: var(--text);
  border-bottom: 0;
}

.drop.right::after {
  border: 4px solid transparent;
  border-left-color: var(--text);
  border-right: 0;
}

.combo {
  display: flex;
  align-items: center;
  height: 22px;
  padding-left: 2px;
  background: var(--field);
  border: 1px solid var(--edge);
}

.combo select, .units {
  appearance: none;
  flex: 1;
  min-width: 0;
  height: 20px;
  padding-left: 5px;
  background-image: linear-gradient(to bottom right, var(--text) 50%, transparent 50%), linear-gradient(to bottom left, var(--text) 50%, transparent 50%);
  background-size: 4px 4px;
  background-position: right 1px center, right 5px center;
  background-repeat: no-repeat;
}

.swatch {
  width: 14px;
  height: 14px;
  margin-left: 5px;
  background: #fff;
  border: 1px solid #10141a;
}

/* Title bar */
.titlebar {
  display: flex;
  align-items: center;
  height: 26px;
  flex: none;
}

.quick {
  display: flex;
  margin-left: -17px;
  margin-right: 1px;
}

.titlebar .quick-layer {
  width: 178px;
  background: var(--panel);
  border-color: var(--panel);
}

.titlebar .tool svg {
  width: 17px;
  height: 17px;
}

.drop-menu {
  width: 14px;
  height: 24px;
  display: flex;
  align-items: center;
  justify-content: flex-end;
}

.drop-menu svg, .minimize svg {
  width: 12px;
  height: 12px;
}

.doc-title {
  flex: 1;
  font-size: 12px;
  font-weight: 400;
  text-align: center;
}

.search {
  width: 178px;
  height: 20px;
  margin-left: 2px;
  padding-left: 3px;
  background: var(--field);
  font-style: italic;
}

.search::placeholder {
  color: #c2c6ce;
}

.login {
  display: flex;
  align-items: center;
  gap: 4px;
  margin-left: 3px;
  width: 104px;
}

.login-menu {
  margin-right: 3px;
}

.divider {
  width: 1px;
  height: 18px;
  margin: 0 4px 0 5px;
  background: #4c5361;
}

.minimize {
  width: 12px;
  height: 24px;
  margin-left: 66px;
  margin-right: -8px;
}

/* Menus and ribbon tabs */
.menubar {
  display: flex;
  align-items: center;
  gap: 25px;
  height: 21px;
  flex: none;
  padding-top: 2px;
  margin-left: -7px;
  color: var(--muted);
  border-bottom: 1px solid #3a4351;
}

.tabs {
  display: flex;
  align-items: center;
  gap: 20px;
  height: 21px;
  flex: none;
  padding-top: 2px;
  margin-left: -6px;
  color: var(--muted);
}

.collapse {
  margin-left: 12px;
  height: 20px;
  display: flex;
  align-items: center;
}

.collapse svg {
  width: 14px;
  height: 9px;
}

.tabs .drop {
  margin-left: -20px;
}

/* Ribbon */
.ribbon {
  display: flex;
  height: 98px;
  flex: none;
  background: var(--panel);
  border-bottom: 1px solid var(--edge);
}

.panel {
  display: flex;
  flex-direction: column;
  flex: none;
  border-right: 1px solid var(--edge);
}

.panel-body {
  display: flex;
  height: 79px;
  padding-top: 4px;
}

.panel-title {
  display: flex;
  align-items: center;
  justify-content: center;
  gap: 6px;
  flex: 1;
}

.panel-title::after {
  content: '';
  border: 4px solid transparent;
  border-top-color: var(--text);
  border-bottom: 0;
}

.big {
  width: 48px;
  padding-top: 1px;
  display: flex;
  flex-direction: column;
  align-items: center;
  white-space: nowrap;
}

.big svg {
  width: 36px;
  height: 36px;
  flex: none;
}

.big .caret {
  margin-top: 2px;
}

.big.two {
  display: block;
  line-height: 17px;
  text-align: center;
}

.big.two svg {
  display: block;
  margin: 0 auto;
}

.smalls {
  display: grid;
  grid-template-columns: 24px;
  grid-auto-rows: 24px;
}

.smalls.with-drop {
  grid-template-columns: 24px 12px;
}

.smalls .tool {
  justify-self: center;
}

.draw {
  width: 211px;
  margin-left: -62px;
}

.draw .panel-body {
  justify-content: flex-end;
  padding-right: 6px;
}

.draw .big:first-child {
  width: 44px;
}

.big.narrow {
  width: 36px;
}

.modify {
  width: 133px;
}

.smalls.modify-grid {
  grid-template-columns: 28px 30px 28px 12px 34px;
}

.annotate {
  width: 126px;
}

.annotate .panel-body {
  padding-left: 1px;
}

.layer {
  width: 252px;
}

.layer .big, .block .big, .props .big, .groups .big {
  width: 42px;
}

.layer-side {
  flex: 1;
  padding: 1px 2px 0 0;
}

.smalls.layer-grid {
  grid-template-columns: repeat(5, 24px);
  margin-top: 1px;
}

.block {
  width: 80px;
}

.props {
  width: 201px;
}

.prop-rows {
  flex: 1;
  display: grid;
  grid-template-columns: 18px 1fr;
  grid-auto-rows: 24px;
  align-items: center;
  column-gap: 2px;
  padding-right: 2px;
}

.prop-rows svg {
  width: 18px;
  height: 18px;
}

.swatch.gray {
  width: 16px;
  height: 16px;
  margin-left: 9px;
  margin-right: 5px;
  background: #808080;
  border-color: #b0b3ba;
}

.line {
  flex: 1;
  height: 1px;
  background: #f0f2f5;
}

.combo select.by {
  flex: none;
  width: 67px;
  padding-left: 2px;
}

.title-row {
  display: flex;
  flex: 1;
}

.title-row .panel-title {
  padding-left: 4px;
}

.launcher {
  width: 14px;
}

.launcher svg {
  width: 8px;
  height: 8px;
}

.groups {
  width: 68px;
}

.tool.picked {
  background: #41546d;
  border: 1px solid #8ec6f0;
}

.utils {
  width: 77px;
}

.utils .big {
  width: 50px;
}

.panel.clip {
  width: 59px;
  background: var(--field);
  border: 1px solid var(--edge);
}

.clip .big {
  width: 100%;
}

.rest {
  flex: 1;
}

/* Drawing area */
.canvas {
  position: relative;
  flex: 1;
  overflow: hidden;
  border-top: 3px solid var(--panel);
}

.canvas > * {
  position: absolute;
}

.viewstyle {
  left: -10px;
  top: 5px;
  color: #06080b;
}

.drawing-title {
  left: 364px;
  top: 30px;
  font-size: 24px;
  line-height: 36px;
  font-weight: 400;
  color: #12ec12;
}

.wardrobe {
  left: 331px;
  height: 126px;
}

.wardrobe.wide {
  top: 127px;
  width: 192px;
}

.wardrobe.single {
  top: 295px;
  width: 51px;
}

.crosshair {
  left: 815px;
  top: 133px;
  width: 270px;
  height: 270px;
}

.ucs {
  left: 0;
  top: 416px;
  width: 14px;
  height: 14px;
}

/* Command line */
.command {
  flex: none;
  border-top: 2px solid var(--panel);
  color: #15181d;
}

.history {
  height: 39px;
  padding: 19px 0 0 4px;
  background: #c8c8c8;
  border-top: 1px solid #10141a;
  border-bottom: 1px solid #10141a;
}

.prompt {
  display: block;
  width: 100%;
  height: 20px;
  background: #fff;
  font-style: italic;
}

.prompt::placeholder {
  color: #808388;
}

/* Layout tabs */
.layouts {
  display: flex;
  gap: 4px;
  height: 21px;
  flex: none;
  border-top: 1px solid #4a4f58;
  color: var(--muted);
}

.layouts a {
  padding: 0 10px 0 7px;
  line-height: 19px;
  height: 19px;
  background: #2d3443;
  border-radius: 8px 0 12px 0;
}

.layouts a + a {
  padding: 0 10px;
}

.layouts button {
  width: 24px;
  height: 19px;
  font-size: 16px;
  line-height: 18px;
  background: #2d3443;
  border-radius: 12px 0 12px 0;
}

/* Status bar */
.status {
  display: flex;
  gap: 3px;
  height: 30px;
  flex: none;
  padding: 2px 0 3px;
  background: var(--edge);
  border-bottom: 2px solid #454b59;
}

.cell, .sub, .coords {
  display: flex;
  align-items: center;
  flex: none;
  background: var(--panel);
}

.cell.ruled {
  gap: 1px;
  background: none;
}

.ruled > .tool {
  background: var(--panel);
}

.sub {
  height: 24px;
}

.coords {
  width: 142px;
  padding-right: 5px;
  justify-content: flex-end;
  overflow: hidden;
  white-space: nowrap;
  font-family: "Noto Sans CJK SC", sans-serif;
}

.status .drop {
  width: 15px;
}

.status .drop::after {
  border-width: 4px 4px 0;
}

.status .tool svg, .icon {
  width: 18px;
  height: 18px;
}

.icon {
  margin: 0 3px;
}

.status .tool.on {
  background: var(--on);
}

.text {
  font-weight: 600;
  white-space: nowrap;
}

.text.model {
  width: 27px;
}

.text.ratio {
  width: 58px;
  font-family: "Noto Sans CJK SC", sans-serif;
  font-weight: 400;
  text-align: right;
}

.units {
  width: 73px;
  flex: none;
  font-weight: 600;
  background-color: var(--panel);
}
```
